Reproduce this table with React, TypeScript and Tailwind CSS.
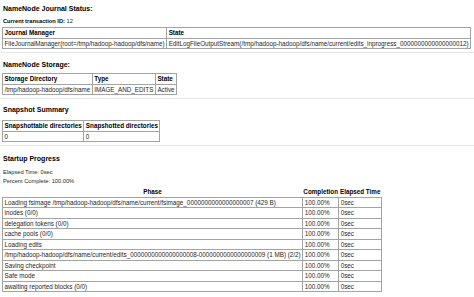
import React from 'react';

type Row = string[];

const journal: Row[] = [
  [
    'FileJournalManager(root=/tmp/hadoop-hadoop/dfs/name)',
    'EditLogFileOutputStream(/tmp/hadoop-hadoop/dfs/name/current/edits_inprogress_0000000000000000012)',
  ],
];

const storage: Row[] = [['/tmp/hadoop-hadoop/dfs/name', 'IMAGE_AND_EDITS', 'Active']];

const snapshots: Row[] = [['0', '0']];

const phases: Row[] = [
  ['Loading fsimage /tmp/hadoop-hadoop/dfs/name/current/fsimage_0000000000000000007 (429 B)', '100.00%', '0sec'],
  ['inodes (0/0)', '100.00%', '0sec'],
  ['delegation tokens (0/0)', '100.00%', '0sec'],
  ['cache pools (0/0)', '100.00%', '0sec'],
  ['Loading edits', '100.00%', '0sec'],
  ['/tmp/hadoop-hadoop/dfs/name/current/edits_0000000000000000008-0000000000000000009 (1 MB) (2/2)', '100.00%', '0sec'],
  ['Saving checkpoint', '100.00%', '0sec'],
  ['Safe mode', '100.00%', '0sec'],
  ['awaiting reported blocks (0/0)', '100.00%', '0sec'],
];

const cell = 'border border-[#a3a3a3] px-[1.5px] py-[1px] leading-[7.5px] whitespace-nowrap overflow-hidden text-left align-middle';

function Heading({ children, className = '' }: { children: React.ReactNode; className?: string }) {
  return <h3 className={`text-[7px] leading-[9px] font-bold text-black ${className}`}>{children}</h3>;
}

function Rule({ className = '' }: { className?: string }) {
  return <div className={`h-px bg-[#e6e6e6] -mx-[2px] ${className}`} />;
}

function GridTable({ head, rows, widths, className = '' }: { head: string[]; rows: Row[]; widths: string[]; className?: string }) {
  return (
    <table className={`table-fixed border-collapse ${className}`}>
      <colgroup>
        {widths.map((w, i) => (
          <col key={i} className={w} />
        ))}
      </colgroup>
      <thead>
        <tr>
          {head.map(h => (
            <th key={h} className={`${cell} font-bold text-black`}>
              {h}
            </th>
          ))}
        </tr>
      </thead>
      <tbody>
        {rows.map((r, i) => (
          <tr key={i}>
            {r.map((c, j) => (
              <td key={j} className={cell}>
                {c}
              </td>
            ))}
          </tr>
        ))}
      </tbody>
    </table>
  );
}

export default function App() {
  return (
    <div className="w-[474px] h-[297px] overflow-hidden bg-white px-[2px] font-['Liberation_Sans',Arial,sans-serif] text-[6.3px] text-[#262626]">
      {/* Journal */}
      <Heading className="mt-[3.5px] ml-px">NameNode Journal Status:</Heading>
      <p className="mt-[5px] ml-px text-[5.7px] leading-[7px]">
        <b className="text-black">Current transaction ID:</b> 12
      </p>
      <GridTable
        className="mt-[2.5px]"
        head={['Journal Manager', 'State']}
        rows={journal}
        widths={['w-[163px]', 'w-[301px]']}
      />
      <Rule className="mt-[3px]" />

      {/* Storage */}
      <Heading className="mt-[6.5px] ml-px">NameNode Storage:</Heading>
      <GridTable
        className="mt-[4.5px]"
        head={['Storage Directory', 'Type', 'State']}
        rows={storage}
        widths={['w-[87px]', 'w-[62px]', 'w-[20px]']}
      />
      <Rule className="mt-[3px]" />

      {/* Snapshots */}
      <Heading className="mt-[5.5px] ml-px">Snapshot Summary</Heading>
      <GridTable
        className="mt-[6.5px]"
        head={['Snapshottable directories', 'Snapshotted directories']}
        rows={snapshots}
        widths={['w-[80px]', 'w-[75px]']}
      />
      <Rule className="mt-[3px]" />

      {/* Startup progress */}
      <Heading className="mt-[7.5px] ml-px">Startup Progress</Heading>
      <p className="mt-[6px] ml-px text-[5.7px] leading-[7px]">Elapsed Time: 0sec</p>
      <p className="mt-[2px] ml-px text-[5.7px] leading-[7px]">Percent Complete: 100.00%</p>
      <table className="mt-[2.5px] table-fixed border-collapse">
        <colgroup>
          <col className="w-[298px]" />
          <col className="w-[36px]" />
          <col className="w-[43px]" />
        </colgroup>
        <thead>
          <tr>
            <th className="px-[1px] py-[1px] leading-[7.5px] font-bold text-black text-center">Phase</th>
            <th className="px-0 py-[1px] leading-[7.5px] font-bold text-black text-center whitespace-nowrap">Completion</th>
            <th className="px-0 py-[1px] leading-[7.5px] font-bold text-black text-center whitespace-nowrap">Elapsed Time</th>
          </tr>
        </thead>
        <tbody>
          {phases.map((r, i) => (
            <tr key={i}>
              {r.map((c, j) => (
                <td key={j} className={cell}>
                  {c}
                </td>
              ))}
            </tr>
          ))}
        </tbody>
      </table>
    </div>
  );
}
